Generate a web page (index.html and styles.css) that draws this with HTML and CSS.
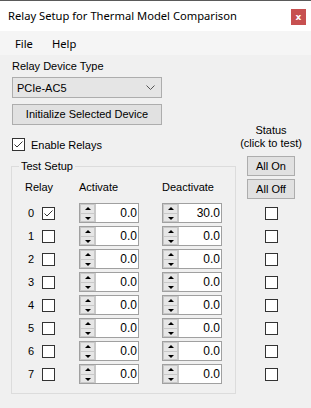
FILE: index.html
```html
<!DOCTYPE html>
<html>
<head>
<meta charset="utf-8">
<link rel="stylesheet" href="styles.css">
</head>
<body>
<div class="window">
  <div class="titlebar">
    <span class="title">Relay Setup for Thermal Model Comparison</span>
    <span class="close">x</span>
  </div>
  <div class="menubar"><span class="menu-item">File</span><span class="menu-item">Help</span></div>
  <div class="content">
    <div class="left">
      <div class="label">Relay Device Type</div>
      <div class="combo">
        <span class="combo-text">PCIe-AC5</span>
        <svg class="chev" width="9" height="5" viewBox="0 0 9 5"><path d="M0.5 0.5 L4.5 4.5 L8.5 0.5" fill="none" stroke="#555" stroke-width="1"/></svg>
      </div>
      <div class="btn btn-wide">Initialize Selected Device</div>
      <div class="check-row"><span class="cb checked"><svg width="11" height="11" viewBox="0 0 11 11"><path d="M1.5 5.5 L4 8 L9.5 2.5" fill="none" stroke="#333" stroke-width="1"/></svg></span><span>Enable Relays</span></div>
      <fieldset class="group">
        <legend>Test Setup</legend>
        <div class="grid">
          <div class="hdr hdr-relay">Relay</div>
          <div class="hdr hdr-act">Activate</div>
          <div class="hdr hdr-deact">Deactivate</div>

          <div class="num">0</div><span class="cb rcb checked"><svg width="11" height="11" viewBox="0 0 11 11"><path d="M1.5 5.5 L4 8 L9.5 2.5" fill="none" stroke="#333" stroke-width="1"/></svg></span>
          <div class="spin"><div class="sbtns"><span class="sb up"></span><span class="sb down"></span></div><span class="val">0.0</span></div>
          <div class="spin"><div class="sbtns"><span class="sb up"></span><span class="sb down"></span></div><span class="val">30.0</span></div>

          <div class="num">1</div><span class="cb rcb"></span>
          <div class="spin"><div class="sbtns"><span class="sb up"></span><span class="sb down"></span></div><span class="val">0.0</span></div>
          <div class="spin"><div class="sbtns"><span class="sb up"></span><span class="sb down"></span></div><span class="val">0.0</span></div>

          <div class="num">2</div><span class="cb rcb"></span>
          <div class="spin"><div class="sbtns"><span class="sb up"></span><span class="sb down"></span></div><span class="val">0.0</span></div>
          <div class="spin"><div class="sbtns"><span class="sb up"></span><span class="sb down"></span></div><span class="val">0.0</span></div>

          <div class="num">3</div><span class="cb rcb"></span>
          <div class="spin"><div class="sbtns"><span class="sb up"></span><span class="sb down"></span></div><span class="val">0.0</span></div>
          <div class="spin"><div class="sbtns"><span class="sb up"></span><span class="sb down"></span></div><span class="val">0.0</span></div>

          <div class="num">4</div><span class="cb rcb"></span>
          <div class="spin"><div class="sbtns"><span class="sb up"></span><span class="sb down"></span></div><span class="val">0.0</span></div>
          <div class="spin"><div class="sbtns"><span class="sb up"></span><span class="sb down"></span></div><span class="val">0.0</span></div>

          <div class="num">5</div><span class="cb rcb"></span>
          <div class="spin"><div class="sbtns"><span class="sb up"></span><span class="sb down"></span></div><span class="val">0.0</span></div>
          <div class="spin"><div class="sbtns"><span class="sb up"></span><span class="sb down"></span></div><span class="val">0.0</span></div>

          <div class="num">6</div><span class="cb rcb"></span>
          <div class="spin"><div class="sbtns"><span class="sb up"></span><span class="sb down"></span></div><span class="val">0.0</span></div>
          <div class="spin"><div class="sbtns"><span class="sb up"></span><span class="sb down"></span></div><span class="val">0.0</span></div>

          <div class="num">7</div><span class="cb rcb"></span>
          <div class="spin"><div class="sbtns"><span class="sb up"></span><span class="sb down"></span></div><span class="val">0.0</span></div>
          <div class="spin"><div class="sbtns"><span class="sb up"></span><span class="sb down"></span></div><span class="val">0.0</span></div>
        </div>
      </fieldset>
    </div>
    <div class="right">
      <div class="status-label">Status<br>(click to test)</div>
      <div class="btn btn-small first">All On</div>
      <div class="btn btn-small">All Off</div>
      <div class="status-list">
        <span class="cb"></span><span class="cb"></span><span class="cb"></span><span class="cb"></span>
        <span class="cb"></span><span class="cb"></span><span class="cb"></span><span class="cb"></span>
      </div>
    </div>
  </div>
</div>
</body>
</html>
```
FILE: styles.css
```css
html, body {
  margin: 0;
  padding: 0;
}
body {
  width: 311px;
  height: 408px;
  overflow: hidden;
  background: #f0f0f0;
  font-family: "Liberation Sans", Arial, sans-serif;
  font-size: 11px;
  color: #000;
}
.window {
  width: 311px;
  height: 408px;
  background: #f0f0f0;
}
.titlebar {
  height: 30px;
  border-top: 1px solid #5a5a5a;
  background: #fff;
  display: flex;
  align-items: center;
  justify-content: space-between;
  padding: 0 5px 0 8px;
}
.title {
  font-family: "Noto Sans", sans-serif;
  font-size: 11.2px;
  color: #000;
  margin-top: -1px;
}
.close {
  width: 15px;
  height: 16px;
  background: #c75050;
  color: #fff;
  font-family: "DejaVu Sans", sans-serif;
  font-weight: bold;
  font-size: 9px;
  display: flex;
  align-items: center;
  justify-content: center;
  margin-top: 2px;
}
.menubar {
  height: 24px;
  background: #f5f5f5;
  display: flex;
  align-items: center;
  padding-left: 15px;
  gap: 19px;
  font-family: "Noto Sans", sans-serif;
  font-size: 11.2px;
}
.content {
  display: flex;
  padding-left: 11px;
  gap: 5px;
}
.left {
  width: 225px;
  display: flex;
  flex-direction: column;
}
.label {
  line-height: 13px;
  margin: 5px 0 0 1px;
}
.combo {
  box-sizing: border-box;
  width: 150px;
  height: 21px;
  margin: 4px 0 0 1px;
  border: 1px solid #adadad;
  background: #e5e5e5;
  display: flex;
  align-items: center;
  justify-content: space-between;
  padding: 0 6px 0 4px;
}
.chev {
  display: block;
}
.btn {
  box-sizing: border-box;
  border: 1px solid #adadad;
  background: #e1e1e1;
  display: flex;
  align-items: center;
  justify-content: center;
  line-height: 13px;
}
.btn-wide {
  width: 150px;
  height: 21px;
  margin: 6px 0 0 1px;
}
.check-row {
  display: flex;
  align-items: center;
  gap: 6px;
  margin: 13px 0 0 1px;
  height: 13px;
}
.cb {
  box-sizing: border-box;
  width: 13px;
  height: 13px;
  border: 1px solid #333;
  background: #fff;
  display: flex;
  align-items: center;
  justify-content: center;
  flex: none;
}
.cb svg {
  display: block;
}
.group {
  margin: 9px 0 0 0;
  padding: 0 0 8px 0;
  border: 1px solid #dcdcdc;
  min-width: 0;
}
.group legend {
  padding: 0 2px;
  margin-left: 7px;
  line-height: 13px;
}
.grid {
  display: grid;
  grid-template-columns: 30px 37px 83px 60px;
  grid-template-rows: 20px;
  grid-auto-rows: 23px;
  padding-top: 8px;
}
.hdr {
  line-height: 13px;
}
.hdr-relay {
  grid-column: 1 / 3;
  padding-left: 13px;
}
.num {
  text-align: right;
  padding-right: 8px;
  line-height: 13px;
  margin-top: 6px;
}
.rcb {
  margin-top: 6px;
}
.spin {
  box-sizing: border-box;
  width: 60px;
  height: 20px;
  margin-top: 2px;
  border: 1px solid #a0a0a0;
  background: #fff;
  display: flex;
}
.sbtns {
  width: 16px;
  display: flex;
  flex-direction: column;
  border-right: 1px solid #c8c8c8;
  box-sizing: border-box;
}
.sb {
  flex: 1;
  background: #e6e6e6;
  border: 1px solid #c8c8c8;
  position: relative;
}
.sb.up { border-bottom: none; }
.sb::after {
  content: "";
  position: absolute;
  left: 4px;
  width: 0;
  height: 0;
  border-left: 3px solid transparent;
  border-right: 3px solid transparent;
}
.sb.up::after {
  top: 2px;
  border-bottom: 3px solid #000;
}
.sb.down::after {
  top: 3px;
  border-top: 3px solid #000;
}
.val {
  flex: 1;
  text-align: right;
  font-size: 12px;
  line-height: 18px;
  padding-right: 1px;
}
.right {
  width: 60px;
  display: flex;
  flex-direction: column;
  align-items: center;
  padding-top: 69px;
}
.status-label {
  text-align: center;
  line-height: 13px;
  white-space: nowrap;
}
.btn-small {
  width: 48px;
  height: 20px;
  margin-top: 3px;
}
.btn-small.first {
  margin-top: 6px;
}
.status-list {
  display: flex;
  flex-direction: column;
  gap: 10px;
  margin-top: 8px;
}
```
